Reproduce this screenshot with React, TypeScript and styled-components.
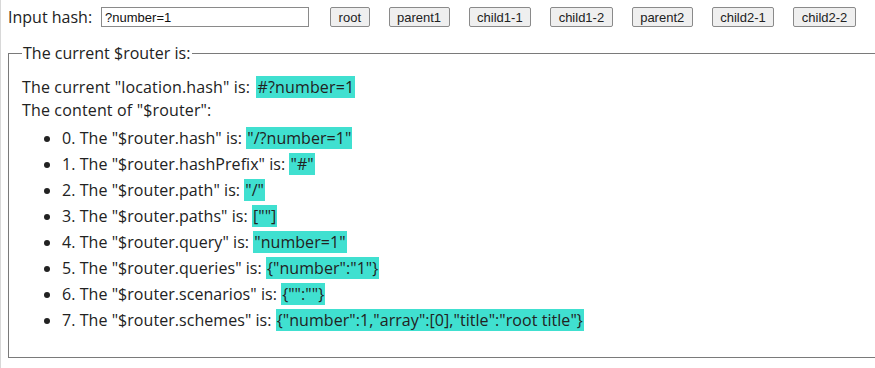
import React from "react";
import styled, { createGlobalStyle } from "styled-components";

const Global = createGlobalStyle`
  html, body { margin: 0; padding: 0; background: #fff; }
  body {
    font-family: "Open Sans", "Noto Sans", sans-serif;
    color: #222;
    border-left: 1px solid #d8d8d8;
    min-height: 368px;
    box-sizing: border-box;
  }
`;

const Page = styled.div`
  padding: 6px 0 0 7px;
`;

const Toolbar = styled.div`
  display: flex;
  align-items: center;
  height: 22px;
`;

const Label = styled.label`
  font-size: 16px;
  margin-right: 9px;
  color: #222;
`;

const HashInput = styled.input`
  box-sizing: border-box;
  width: 208px;
  height: 20px;
  border: 1px solid #8a8a8a;
  border-radius: 0;
  padding: 1px 3px;
  font-family: "Liberation Sans", Arial, sans-serif;
  font-size: 13px;
  color: #111;
  margin-right: 21px;
`;

const Buttons = styled.div`
  display: flex;
  gap: 19px;
`;

const NavButton = styled.button`
  box-sizing: border-box;
  height: 20px;
  padding: 0 7.5px;
  background: #efefef;
  border: 1px solid #8a8a8a;
  border-radius: 2px;
  font-family: "Liberation Sans", Arial, sans-serif;
  font-size: 13px;
  color: #222;
`;

const Frame = styled.fieldset`
  margin: 14px -20px 0 0;
  padding: 12px 0 24px 13px;
  border: 1px solid #7a7a7a;
  border-right: none;
  box-sizing: border-box;
`;

const Legend = styled.legend`
  font-size: 16px;
  padding: 0 2px 0 1px;
  margin-left: 0;
  color: #222;
`;

const Line = styled.div`
  font-size: 16px;
  letter-spacing: 0.15px;
  line-height: 23px;
  height: 23px;
`;

const List = styled.ul`
  margin: 3px 0 0 0;
  padding-left: 40px;
`;

const Item = styled.li`
  font-size: 16px;
  letter-spacing: 0.05px;
  line-height: 26px;
  height: 26px;
`;

const Value = styled.span`
  background: #40e0d0;
  padding: 0 1px;
`;

const Gap = styled.span<{ $w: number }>`
  display: inline-block;
  width: ${(p) => p.$w}px;
`;

const buttons = ["root", "parent1", "child1-1", "child1-2", "parent2", "child2-1", "child2-2"];

const items: [string, string][] = [
  ["hash", '"/?number=1"'],
  ["hashPrefix", '"#"'],
  ["path", '"/"'],
  ["paths", '[""]'],
  ["query", '"number=1"'],
  ["queries", '{"number":"1"}'],
  ["scenarios", '{"":""}'],
  ["schemes", '{"number":1,"array":[0],"title":"root title"}'],
];

export default function App() {
  return (
    <>
      <Global />
      <Page>
        <Toolbar>
          <Label>Input hash:</Label>
          <HashInput defaultValue="?number=1" />
          <Buttons>
            {buttons.map((b) => (
              <NavButton key={b}>{b}</NavButton>
            ))}
          </Buttons>
        </Toolbar>
        <Frame>
          <Legend>The current $router is:</Legend>
          <Line>
            The current "location.hash" is: <Gap $w={2} />
            <Value>#?number=1</Value>
          </Line>
          <Line>The content of "$router":</Line>
          <List>
            {items.map(([k, v], i) => (
              <Item key={k}>
                {i}. The "$router.{k}" is: <Value>{v}</Value>
              </Item>
            ))}
          </List>
        </Frame>
      </Page>
    </>
  );
}
